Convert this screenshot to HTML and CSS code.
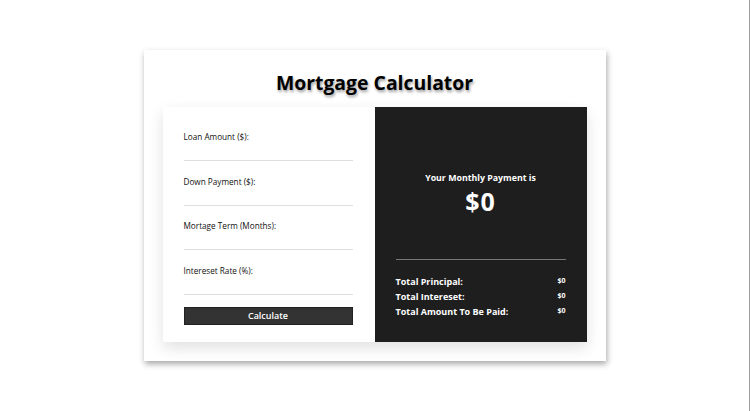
FILE: index.html
```html
<!DOCTYPE html>
<html lang="en">
<head>
<meta charset="utf-8">
<title>Mortgage Calculator</title>
<link rel="stylesheet" href="styles.css">
</head>
<body>
<div class="page">
  <div class="card">
    <h1 class="title">Mortgage Calculator</h1>
    <div class="calc">
      <form class="form">
        <div class="field">
          <label class="label">Loan Amount ($):</label>
          <input class="input" type="text">
        </div>
        <div class="field">
          <label class="label">Down Payment ($):</label>
          <input class="input" type="text">
        </div>
        <div class="field">
          <label class="label">Mortage Term (Months):</label>
          <input class="input" type="text">
        </div>
        <div class="field">
          <label class="label">Intereset Rate (%):</label>
          <input class="input" type="text">
        </div>
        <button class="btn" type="button">Calculate</button>
      </form>
      <div class="result">
        <div class="monthly">
          <div class="monthly-label">Your Monthly Payment is</div>
          <div class="monthly-value">$0</div>
        </div>
        <div class="totals">
          <div class="row"><span class="row-label">Total Principal:</span><span class="row-value">$0</span></div>
          <div class="row"><span class="row-label">Total Intereset:</span><span class="row-value">$0</span></div>
          <div class="row"><span class="row-label">Total Amount To Be Paid:</span><span class="row-value">$0</span></div>
        </div>
      </div>
    </div>
  </div>
</div>
</body>
</html>
```
FILE: styles.css
```css
* { box-sizing: border-box; }
html, body { margin: 0; padding: 0; background: #fff; }
body { font-family: "Open Sans", "Liberation Sans", sans-serif; color: #000; }
.page {
  width: 750px;
  height: 411px;
  border-right: 1px solid #a0a0a0;
  padding-top: 50px;
  display: flex;
  flex-direction: column;
  align-items: center;
}
.card {
  width: 462px;
  height: 311px;
  background: #fff;
  box-shadow: 1px 3px 6px rgba(0,0,0,0.35);
  padding: 0 19px 19px;
  display: flex;
  flex-direction: column;
}
.title {
  margin: 0;
  height: 57px;
  line-height: 66px;
  text-align: center;
  font-size: 19.4px;
  font-weight: 700;
  text-shadow: 1px 2px 3px rgba(0,0,0,0.4);
}
.calc {
  display: flex;
  height: 235px;
  box-shadow: 0 6px 14px rgba(0,0,0,0.12);
}
.form {
  width: 212px;
  background: #fff;
  padding: 24px 22px 0 21px;
  display: flex;
  flex-direction: column;
}
.field { display: flex; flex-direction: column; margin-bottom: 14.5px; }
.field:nth-child(4) { margin-bottom: 12px; }
.label {
  font-size: 8.2px;
  line-height: 12px;
  color: #111;
}
.input {
  height: 18px;
  border: none;
  border-bottom: 1px solid #ddd;
  outline: none;
  padding: 0;
  font: inherit;
  background: transparent;
}
.btn {
  height: 18px;
  width: 100%;
  background: #333;
  border: 1px solid #222;
  color: #fff;
  font-family: inherit;
  font-size: 9px;
  font-weight: 600;
  padding: 0;
  line-height: 16px;
}
.result {
  width: 212px;
  background: #1e1e1e;
  color: #fff;
  padding: 0 21px 23px;
  display: flex;
  flex-direction: column;
}
.monthly {
  height: 153px;
  border-bottom: 1px solid #777;
  display: flex;
  flex-direction: column;
  align-items: center;
  padding-top: 65px;
}
.monthly-label {
  font-size: 8.8px;
  font-weight: 700;
  line-height: 13px;
}
.monthly-value {
  font-size: 25px;
  font-weight: 700;
  line-height: 30px;
  letter-spacing: 1px;
  margin-top: 1px;
}
.totals { padding-top: 14px; display: flex; flex-direction: column; }
.row {
  display: flex;
  justify-content: space-between;
  align-items: flex-start;
  line-height: 15px;
}
.row-label { font-size: 9px; font-weight: 700; }
.row-value { font-size: 7px; font-weight: 700; line-height: 13px; }
```
